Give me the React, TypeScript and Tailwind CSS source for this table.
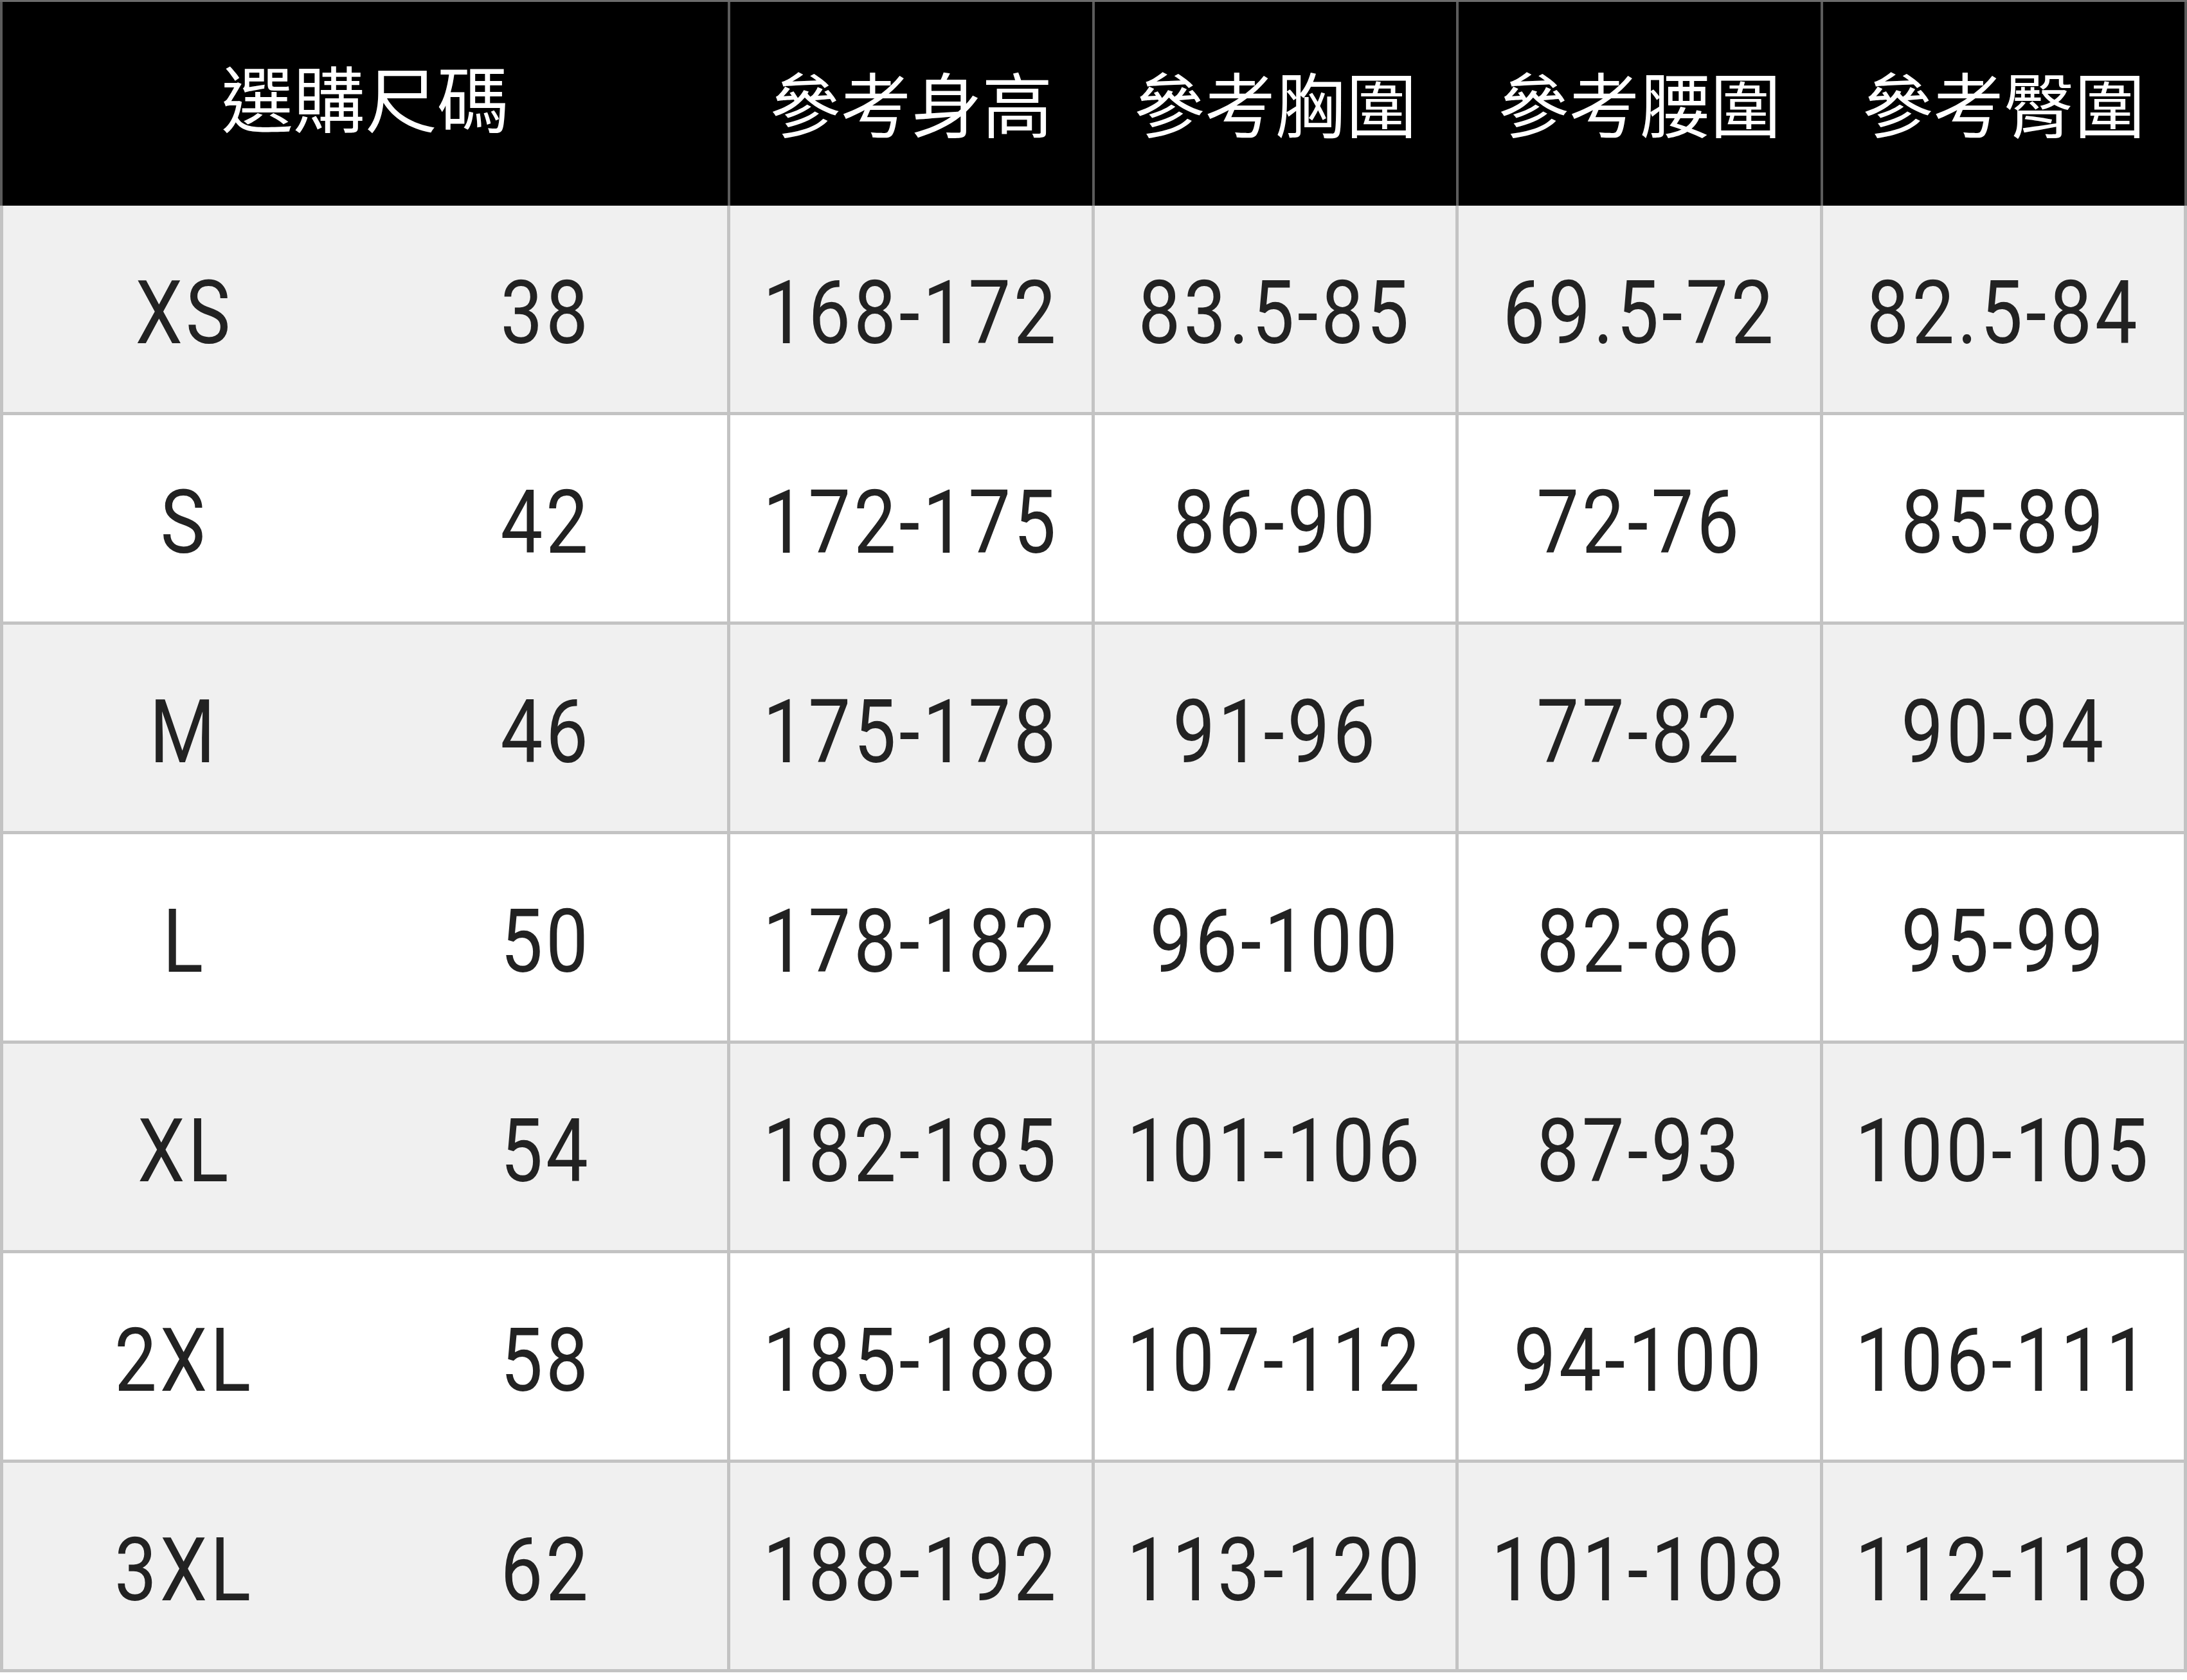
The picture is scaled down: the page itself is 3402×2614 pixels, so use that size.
const headers = ['參考身高', '參考胸圍', '參考腰圍', '參考臀圍']

const rows = [
  ['XS', '38', '168-172', '83.5-85', '69.5-72', '82.5-84'],
  ['S', '42', '172-175', '86-90', '72-76', '85-89'],
  ['M', '46', '175-178', '91-96', '77-82', '90-94'],
  ['L', '50', '178-182', '96-100', '82-86', '95-99'],
  ['XL', '54', '182-185', '101-106', '87-93', '100-105'],
  ['2XL', '58', '185-188', '107-112', '94-100', '106-111'],
  ['3XL', '62', '188-192', '113-120', '101-108', '112-118'],
]

function Num({ children }: { children: string }) {
  // condensed DIN-ish look: squeeze Roboto horizontally
  return (
    <span className="inline-block scale-x-[0.85] font-['Roboto',sans-serif] text-[138px] leading-none text-[#222222] tracking-[0.04em]">
      {children}
    </span>
  )
}

export default function App() {
  return (
    <div className="w-[3402px] h-[2614px] bg-white overflow-hidden">
      {/* Header */}
      <div className="grid grid-cols-[1136px_567px_566px_567px_566px] h-[320px] bg-black border-t-[3px] border-[#6b6b6b] font-['Noto_Sans_CJK_TC','Noto_Sans_CJK_SC',sans-serif] text-white leading-none">
        <div className="flex items-center justify-center border-l-[4px] border-r-[4px] border-[#5c5c5c] text-[112px] pb-[26px]">
          選購尺碼
        </div>
        {headers.map((h) => (
          <div
            key={h}
            className="flex items-center justify-center border-r-[4px] border-[#5c5c5c] text-[110px] pb-[8px]"
          >
            {h}
          </div>
        ))}
      </div>

      {/* Body */}
      {rows.map((r, i) => (
        <div
          key={r[0]}
          className={`grid grid-cols-[1136px_567px_566px_567px_566px] h-[326px] border-b-[5px] border-[#c3c3c3] ${
            i % 2 === 0 ? 'bg-[#f0f0f0]' : 'bg-white'
          }`}
        >
          <div className="grid grid-cols-2 border-l-[5px] border-r-[5px] border-[#c3c3c3]">
            <div className="flex items-center justify-center pt-[12px]">
              <Num>{r[0]}</Num>
            </div>
            <div className="flex items-center justify-center pt-[12px]">
              <Num>{r[1]}</Num>
            </div>
          </div>
          {r.slice(2).map((v, j) => (
            <div key={j} className="flex items-center justify-center border-r-[5px] border-[#c3c3c3] pt-[12px]">
              <Num>{v}</Num>
            </div>
          ))}
        </div>
      ))}
    </div>
  )
}
